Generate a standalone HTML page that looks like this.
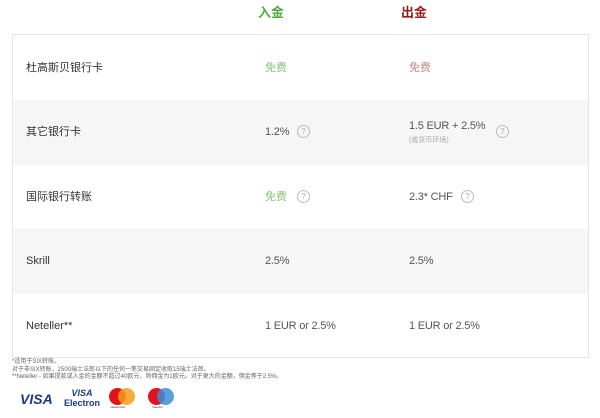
<!DOCTYPE html>
<html><head><meta charset="utf-8"><style>
body{margin:0;width:600px;height:418px;background:#fff;font-family:"Liberation Sans","Noto Sans CJK SC",sans-serif;color:#333;position:relative;overflow:hidden}
.a{position:absolute}
.h{font-weight:bold;font-size:13px;top:2px}
.box{left:12px;top:34px;width:575px;height:322px;border:1px solid #e6e6e6}
.row{position:absolute;left:0;width:575px;height:65px}
.g{background:#f6f6f6}
.t{position:absolute;font-size:11px;line-height:14px}
.n{font-size:11px;letter-spacing:-0.2px;color:#555}
.q{position:absolute;width:11px;height:11px;border:1px solid #bbb;border-radius:50%;font-size:8px;line-height:11px;text-align:center;color:#aaa}
.fn{font-size:6px;color:#666;left:12px;line-height:7.5px}
.c{position:absolute;width:17px;height:17px;border-radius:50%}
</style></head><body>
<div class="a h" style="left:258px;color:#53a93f">入金</div>
<div class="a h" style="left:401px;color:#9b1c1c">出金</div>
<div class="a box">
<div class="row" style="top:0"></div>
<div class="row g" style="top:65px"></div>
<div class="row" style="top:129px"></div>
<div class="row g" style="top:194px"></div>
<div class="row" style="top:258px"></div>
<div class="t" style="left:13px;top:26px">杜高斯贝银行卡</div>
<div class="t" style="left:252px;top:26px;color:#8cc47c">免费</div>
<div class="t" style="left:396px;top:26px;color:#c48a8a">免费</div>
<div class="t" style="left:13px;top:90px">其它银行卡</div>
<div class="t n" style="left:252px;top:90px">1.2%</div>
<div class="q" style="left:284px;top:90px">?</div>
<div class="t n" style="left:396px;top:84px">1.5 EUR + 2.5%</div>
<div class="t" style="left:396px;top:99px;font-size:7px;color:#aaa">(或货币环境)</div>
<div class="q" style="left:483px;top:90px">?</div>
<div class="t" style="left:13px;top:155px">国际银行转账</div>
<div class="t" style="left:252px;top:155px;color:#8cc47c">免费</div>
<div class="q" style="left:284px;top:155px">?</div>
<div class="t n" style="left:396px;top:155px">2.3* CHF</div>
<div class="q" style="left:448px;top:155px">?</div>
<div class="t" style="left:13px;top:219px">Skrill</div>
<div class="t n" style="left:252px;top:219px">2.5%</div>
<div class="t n" style="left:396px;top:219px">2.5%</div>
<div class="t" style="left:13px;top:284px">Neteller**</div>
<div class="t n" style="left:252px;top:284px">1 EUR or 2.5%</div>
<div class="t n" style="left:396px;top:284px">1 EUR or 2.5%</div>
</div>
<div class="a fn" style="top:359px">*适用于SIX转账。<br>对于非SIX转账，2500瑞士法郎以下的任何一笔交易固定收取15瑞士法郎。<br>**Neteller - 如果提款或入金的金额不超过40欧元，则佣金为1欧元。对于更大的金额，佣金等于2.5%。</div>
<div class="a" style="left:20px;top:391px;font:italic bold 14px 'Liberation Sans',sans-serif;color:#1a3a8a">VISA</div>
<div class="a" style="left:64px;top:388px;font:italic bold 9px 'Liberation Sans',sans-serif;color:#1a3a8a;text-align:center;line-height:10px">VISA<br><span style="font-style:normal">Electron</span></div>
<div class="c" style="left:109px;top:388px;background:#e2131b"></div>
<div class="c" style="left:118px;top:388px;background:#f79e1b;opacity:.85"></div>
<div class="a" style="left:110px;top:405px;font-size:3px;color:#333">mastercard</div>
<div class="c" style="left:148px;top:388px;background:#e2131b"></div>
<div class="c" style="left:157px;top:388px;background:#3a8ed8;opacity:.85"></div>
<div class="a" style="left:152px;top:405px;font-size:3px;color:#333">maestro</div>
</body></html>
